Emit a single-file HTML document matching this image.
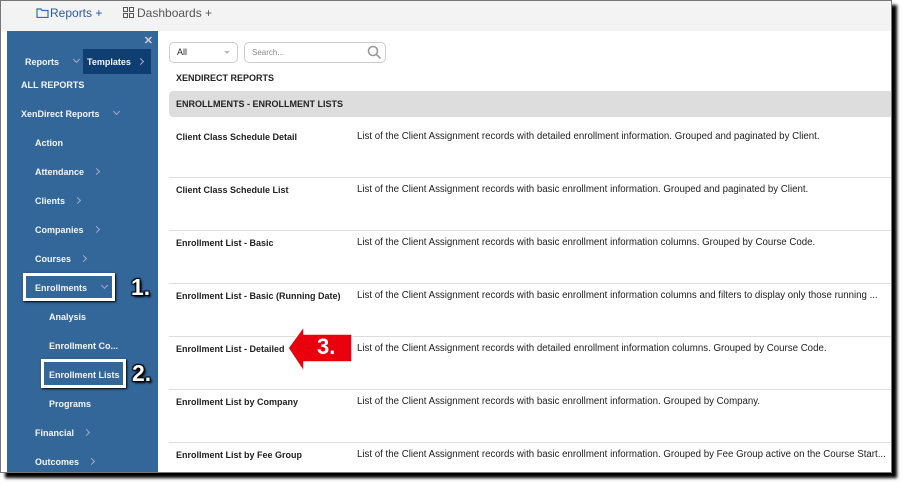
<!DOCTYPE html>
<html><head><style>
*{margin:0;padding:0;box-sizing:border-box}
body{width:904px;height:484px;background:#fff;font-family:"Liberation Sans",Arial,sans-serif;position:relative;overflow:hidden}
.frame{position:absolute;left:0;top:0;width:892px;height:473px;border:1px solid #777;background:#fff;box-shadow:5px 5px 3px #000}
.top{position:absolute;left:1px;top:1px;width:890px;height:30px;background:#f3f3f3}
.t{position:absolute;font-size:12px}
.side{position:absolute;left:7px;top:31px;width:151px;height:441px;background:#336699;color:#fff}
.s{position:absolute;font-size:9px;font-weight:bold;color:#f4f6fa;white-space:nowrap}
.ch{display:inline-block;width:5px;height:5px;border-right:1px solid #aac;border-bottom:1px solid #aac;transform:rotate(-45deg);margin-left:10px;vertical-align:1px}
.cd{display:inline-block;width:5px;height:5px;border-right:1px solid #aac;border-bottom:1px solid #aac;transform:rotate(45deg);margin-left:12px;vertical-align:3px}
.r{position:absolute;font-size:9px;color:#222;white-space:nowrap}
.d{font-size:9.7px}
.b{font-weight:bold}
.sep{position:absolute;left:169px;width:722px;height:1px;background:#ddd}
.num{position:absolute;font-size:23px;font-weight:bold;color:#fff;text-shadow:1px 1px 1px #000,-1px -1px 1px #000,1px -1px 1px #000,-1px 1px 1px #000,2px 2px 2px #000}
</style></head><body>
<div class="frame"></div>
<div class="top"></div>
<svg style="position:absolute;left:36px;top:7px" width="13" height="11"><path d="M1 2h4l1 1.5h6v7H1z" fill="none" stroke="#2a6fc0" stroke-width="1.2"/></svg>
<div class="t" style="left:50px;top:6px;color:#2a5a9a">Reports +</div>
<svg style="position:absolute;left:123px;top:7px" width="11" height="11" fill="none" stroke="#555"><rect x="0.5" y="0.5" width="4" height="4"/><rect x="6.5" y="0.5" width="4" height="4"/><rect x="0.5" y="6.5" width="4" height="4"/><rect x="6.5" y="6.5" width="4" height="4"/></svg>
<div class="t" style="left:137px;top:6px;color:#555">Dashboards +</div>

<div class="side">
<div style="position:absolute;right:5px;top:3px;font-size:11px;font-weight:bold;color:#ccd">✕</div>
<div style="position:absolute;left:76px;top:18px;width:68px;height:25px;background:#0f3e73"></div>
</div>
<div class="s" style="left:25px;top:57px">Reports <span class="cd"></span></div>
<div class="s" style="left:87px;top:57px">Templates<span class="ch" style="margin-left:7px"></span></div>
<div class="s" style="left:21px;top:80px">ALL REPORTS</div>
<div class="s" style="left:21px;top:109px">XenDirect Reports <span class="cd"></span></div>
<div class="s" style="left:35px;top:138px">Action</div>
<div class="s" style="left:35px;top:167px">Attendance<span class="ch"></span></div>
<div class="s" style="left:35px;top:196px">Clients<span class="ch"></span></div>
<div class="s" style="left:35px;top:225px">Companies<span class="ch"></span></div>
<div class="s" style="left:35px;top:254px">Courses<span class="ch"></span></div>
<div style="position:absolute;left:23px;top:273px;width:92px;height:28px;border:3px solid #fff;box-shadow:1px 1px 2px #000"></div>
<div class="s" style="left:35px;top:283px">Enrollments <span class="cd"></span></div>
<div class="s" style="left:49px;top:312px">Analysis</div>
<div class="s" style="left:49px;top:341px">Enrollment Co...</div>
<div style="position:absolute;left:41px;top:359px;width:85px;height:29px;border:3px solid #fff;box-shadow:1px 1px 2px #000"></div>
<div class="s" style="left:49px;top:370px">Enrollment Lists</div>
<div class="s" style="left:49px;top:399px">Programs</div>
<div class="s" style="left:35px;top:428px">Financial<span class="ch"></span></div>
<div class="s" style="left:35px;top:457px">Outcomes<span class="ch"></span></div>
<div class="num" style="left:131px;top:274px">1.</div>
<div class="num" style="left:132px;top:360px">2.</div>

<div style="position:absolute;left:169px;top:42px;width:69px;height:21px;border:1px solid #ccc;border-radius:5px;font-size:9px;padding:4px 7px;color:#222">All<span style="position:absolute;right:7px;top:8px;border:3px solid transparent;border-top-color:#bbb"></span></div>
<div style="position:absolute;left:244px;top:42px;width:142px;height:21px;border:1px solid #ccc;border-radius:5px;font-size:8px;padding:5px 7px;color:#888">Search...</div>
<svg style="position:absolute;left:367px;top:45px" width="15" height="15" fill="none" stroke="#999" stroke-width="1.6"><circle cx="6" cy="6" r="4.5"/><path d="M9.5 9.5l4 4"/></svg>
<div class="r b" style="left:176px;top:73px">XENDIRECT REPORTS</div>
<div style="position:absolute;left:169px;top:91px;width:722px;height:26px;background:#ddd;border-radius:4px 0 0 4px"></div>
<div class="r b" style="left:176px;top:99px">ENROLLMENTS - ENROLLMENT LISTS</div>

<div class="r b" style="left:176px;top:132px">Client Class Schedule Detail</div><div class="r d" style="left:357px;top:131px">List of the Client Assignment records with detailed enrollment information. Grouped and paginated by Client.</div>
<div class="sep" style="top:177px"></div>
<div class="r b" style="left:176px;top:185px">Client Class Schedule List</div><div class="r d" style="left:357px;top:184px">List of the Client Assignment records with basic enrollment information. Grouped and paginated by Client.</div>
<div class="sep" style="top:230px"></div>
<div class="r b" style="left:176px;top:238px">Enrollment List - Basic</div><div class="r d" style="left:357px;top:237px">List of the Client Assignment records with basic enrollment information columns. Grouped by Course Code.</div>
<div class="sep" style="top:283px"></div>
<div class="r b" style="left:176px;top:291px">Enrollment List - Basic (Running Date)</div><div class="r d" style="left:357px;top:290px">List of the Client Assignment records with basic enrollment information columns and filters to display only those running ...</div>
<div class="sep" style="top:336px"></div>
<div class="r b" style="left:176px;top:344px">Enrollment List - Detailed</div><div class="r d" style="left:357px;top:343px">List of the Client Assignment records with detailed enrollment information columns. Grouped by Course Code.</div>
<div class="sep" style="top:389px"></div>
<div class="r b" style="left:176px;top:397px">Enrollment List by Company</div><div class="r d" style="left:357px;top:396px">List of the Client Assignment records with basic enrollment information. Grouped by Company.</div>
<div class="sep" style="top:442px"></div>
<div class="r b" style="left:176px;top:450px">Enrollment List by Fee Group</div><div class="r d" style="left:357px;top:449px">List of the Client Assignment records with basic enrollment information. Grouped by Fee Group active on the Course Start...</div>

<svg style="position:absolute;left:286px;top:324px" width="70" height="50"><path d="M2 24L18 2v8h48v28H18v10z" fill="#e8000c" stroke="#fff" stroke-width="1.5"/></svg>
<div style="position:absolute;left:317px;top:334px;font-size:22px;font-weight:bold;color:#fff">3.</div>
</body></html>
